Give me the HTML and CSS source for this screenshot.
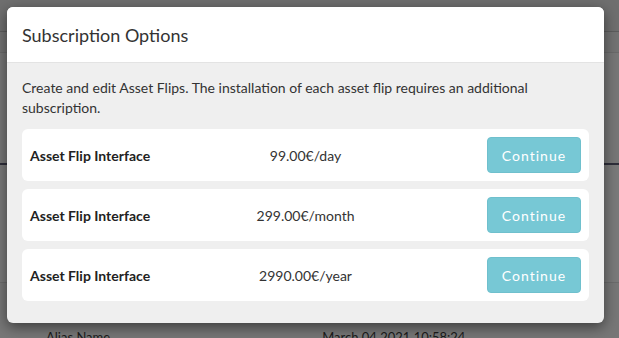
FILE: index.html
```html
<!DOCTYPE html>
<html>
<head>
<meta charset="utf-8">
<link rel="stylesheet" href="styles.css">
</head>
<body>
<div class="page">
  <div class="page-top"></div>
  <div class="page-band"><span class="page-frag">g.</span></div>
  <div class="page-mid"></div>
  <div class="page-row"></div>
  <div class="page-foot">
    <span class="foot-a">Alias Name</span>
    <span class="foot-b">March 04 2021 10:58:24</span>
  </div>
</div>
<div class="modal">
  <div class="modal-header">
    <h4 class="modal-title">Subscription Options</h4>
  </div>
  <div class="modal-body">
    <p class="desc">Create and edit Asset Flips. The installation of each asset flip requires an additional subscription.</p>
    <div class="plan">
      <div class="plan-name">Asset Flip Interface</div>
      <div class="plan-price">99.00€/day</div>
      <div class="plan-action"><button class="btn">Continue</button></div>
    </div>
    <div class="plan">
      <div class="plan-name">Asset Flip Interface</div>
      <div class="plan-price">299.00€/month</div>
      <div class="plan-action"><button class="btn">Continue</button></div>
    </div>
    <div class="plan">
      <div class="plan-name">Asset Flip Interface</div>
      <div class="plan-price">2990.00€/year</div>
      <div class="plan-action"><button class="btn">Continue</button></div>
    </div>
  </div>
</div>
</body>
</html>
```
FILE: styles.css
```css
html, body {
  margin: 0;
  padding: 0;
}
body {
  width: 619px;
  height: 338px;
  overflow: hidden;
  background: #777777;
  font-family: Lato, "Open Sans", sans-serif;
  position: relative;
}
.page {
  display: flex;
  flex-direction: column;
  height: 338px;
}
.page-top {
  height: 31px;
  flex: none;
  border-bottom: 1px solid #5d5d5d;
  background: #6f6f6f;
}
.page-band {
  height: 20px;
  flex: none;
  border-bottom: 1px solid #6a6a6a;
  background: #737373;
}
.page-frag {
  display: block;
  margin-top: 17px;
  font-size: 14px;
  line-height: 16px;
  color: #1e1e1e;
}
.page-mid {
  height: 110px;
  flex: none;
  border-bottom: 2px solid #2e2e3a;
  background: #777777;
}
.page-row {
  height: 117px;
  flex: none;
  border-bottom: 1px solid #6c6c6c;
  background: #7a7a7a;
}
.page-foot {
  display: flex;
  flex: none;
  padding-top: 46px;
  font-size: 13px;
  line-height: 16px;
  color: #1b1b1b;
}
.foot-a { margin-left: 46px; }
.foot-b { margin-left: 212px; }

.modal {
  position: absolute;
  left: 7px;
  top: 7px;
  width: 597px;
  background: #efefef;
  border-radius: 6px;
  box-shadow: 0 4px 14px rgba(0, 0, 0, 0.5);
  overflow: hidden;
}
.modal-header {
  background: #ffffff;
  height: 56px;
  box-sizing: border-box;
  padding: 17px 15px 0;
  border-bottom: 1px solid #e3e3e3;
}
.modal-title {
  margin: 0;
  font-size: 18px;
  font-weight: 400;
  color: #333333;
  line-height: 22px;
}
.modal-body {
  padding: 15px 15px 22px;
  display: flex;
  flex-direction: column;
  gap: 8px;
}
.desc {
  margin: 0 0 3px;
  font-size: 14px;
  line-height: 20px;
  color: #333333;
}
.plan {
  display: grid;
  grid-template-columns: 1fr auto 1fr;
  align-items: center;
  height: 52px;
  box-sizing: border-box;
  padding: 0 8px;
  background: #ffffff;
  border-radius: 6px;
}
.plan-name {
  font-size: 14px;
  font-weight: 700;
  color: #222222;
}
.plan-price {
  font-size: 14px;
  color: #333333;
  text-align: center;
}
.plan-action {
  display: flex;
  justify-content: flex-end;
}
.btn {
  width: 94px;
  height: 36px;
  border: 1px solid #6fc0cd;
  border-radius: 4px;
  background: #77c8d5;
  color: #ffffff;
  font-family: Lato, "Open Sans", sans-serif;
  font-size: 14px;
  letter-spacing: 1px;
  padding: 0;
}
```
